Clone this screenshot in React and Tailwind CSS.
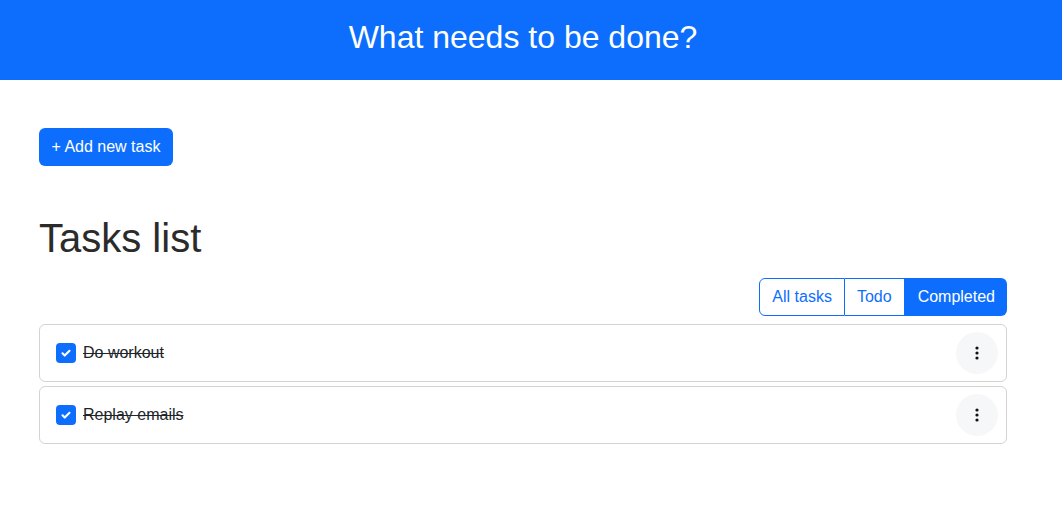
export default function App() {
  const tasks = ["Do workout", "Replay emails"];
  return (
    <div className="min-h-screen bg-white text-[#212529]" style={{ fontFamily: '"Liberation Sans", Arial, sans-serif' }}>
      <header className="h-[80px] bg-[#0d6efd] flex items-center pl-[39px] pr-[55px] pb-[7px]">
        <h1 className="w-full text-center text-white text-[32px] leading-none">What needs to be done?</h1>
      </header>
      <main className="pl-[39px] pr-[55px]">
        <div className="pt-[48px]">
          <button className="h-[38px] px-[12.5px] rounded-[6px] bg-[#0d6efd] text-white text-[16px] leading-none">+ Add new task</button>
        </div>
        <h2 className="mt-[48px] text-[40px] leading-[1.2] text-[#2b2b2b]">Tasks list</h2>
        <div className="mt-[16px] flex justify-end">
          <div className="flex h-[38px] text-[16px]">
            <button className="px-[12px] border border-[#0d6efd] text-[#0d6efd] rounded-l-[6px]">All tasks</button>
            <button className="px-[12px] border border-l-0 border-[#0d6efd] text-[#0d6efd]">Todo</button>
            <button className="pl-[13px] pr-[12px] bg-[#0d6efd] text-white rounded-r-[6px]">Completed</button>
          </div>
        </div>
        <div className="mt-[8px] flex flex-col gap-[4px]">
          {tasks.map((t) => (
            <div key={t} className="h-[58px] border border-[#d3d3d3] rounded-[6px] flex items-center pl-[16px] pr-[8px]">
              <span className="w-[20px] h-[20px] rounded-[4px] bg-[#0d6efd] flex items-center justify-center">
                <svg width="14" height="14" viewBox="0 0 20 20" fill="none">
                  <path d="M5 10.5l3.2 3.2l6.8-6.8" stroke="white" strokeWidth="3" strokeLinecap="round" strokeLinejoin="round" />
                </svg>
              </span>
              <span className="ml-[7px] text-[16px] line-through text-[#212529]">{t}</span>
              <button className="ml-auto w-[42px] h-[42px] rounded-full bg-[#f6f7f9] flex items-center justify-center">
                <svg width="4" height="14" viewBox="0 0 4 14">
                  <circle cx="2" cy="2" r="1.6" fill="#111" />
                  <circle cx="2" cy="7" r="1.6" fill="#111" />
                  <circle cx="2" cy="12" r="1.6" fill="#111" />
                </svg>
              </button>
            </div>
          ))}
        </div>
      </main>
    </div>
  );
}
